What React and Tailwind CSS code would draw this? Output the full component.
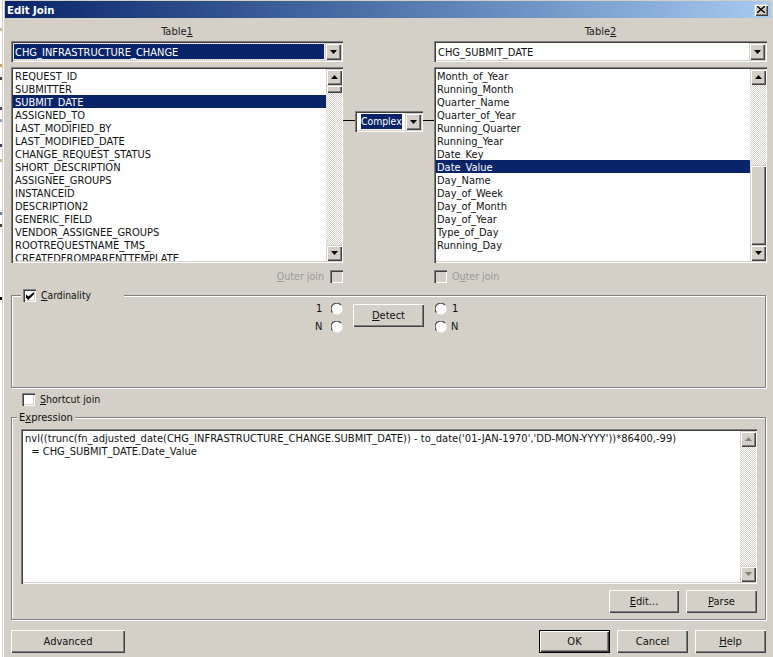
const FONT = "font-['DejaVu_Sans_Condensed','DejaVu_Sans',sans-serif] [font-stretch:condensed]";
const SUNKEN = "shadow-[inset_1px_1px_0_#808080,inset_2px_2px_0_#404040,inset_-1px_-1px_0_#ffffff,inset_-2px_-2px_0_#d4d0c8]";
const RAISED = "shadow-[inset_1px_1px_0_#ffffff,inset_-1px_-1px_0_#404040,inset_-2px_-2px_0_#808080]";
const RAISED2 = "shadow-[inset_1px_1px_0_#d4d0c8,inset_2px_2px_0_#ffffff,inset_-1px_-1px_0_#404040,inset_-2px_-2px_0_#808080]";
const CHECKER = "bg-[conic-gradient(#ffffff_25%,#d4d0c8_0_50%,#ffffff_0_75%,#d4d0c8_0)] bg-[length:2px_2px]";

const left = ["REQUEST_ID","SUBMITTER","SUBMIT_DATE","ASSIGNED_TO","LAST_MODIFIED_BY","LAST_MODIFIED_DATE","CHANGE_REQUEST_STATUS","SHORT_DESCRIPTION","ASSIGNEE_GROUPS","INSTANCEID","DESCRIPTION2","GENERIC_FIELD","VENDOR_ASSIGNEE_GROUPS","ROOTREQUESTNAME_TMS_","CREATEDFROMPARENTTEMPLATE"];
const right = ["Month_of_Year","Running_Month","Quarter_Name","Quarter_of_Year","Running_Quarter","Running_Year","Date_Key","Date_Value","Day_Name","Day_of_Week","Day_of_Month","Day_of_Year","Type_of_Day","Running_Day"];
const specks = [[28,"#c8b890"],[33,"#d8a060"],[10,"#404040"],[27,"#604060"],[9,"#90a8c0"],[22,"#404060"],[12,"#c8b890"],[50,"#6080a0"],[9,"#404040"],[70,"#000000"]];

function Arrow({ down = true, disabled = false }) {
  return (
    <svg width="7" height="4" viewBox="0 0 7 4" className="block">
      <path d={down ? "M0 0h7L3.5 4z" : "M0 4h7L3.5 0z"} fill={disabled ? "#808080" : "#000"} />
    </svg>
  );
}
function ScrollBtn({ down = true, disabled = false }) {
  return (
    <div className={`w-4 h-4 shrink-0 flex items-center justify-center bg-[#d4d0c8] ${RAISED2}`}>
      <Arrow down={down} disabled={disabled} />
    </div>
  );
}
function Combo({ text, selected }) {
  return (
    <div className={`h-[21px] flex items-center bg-white pl-[3px] pr-[2px] ${SUNKEN}`}>
      <span className={`flex-1 min-w-0 h-[15px] leading-[17px] pl-[1px] mr-[1px] whitespace-nowrap ${selected ? "bg-[#0a246a] text-white outline-1 outline-dotted outline-[#d4d0c8]" : ""}`}>{text}</span>
      <div className={`w-4 h-[17px] shrink-0 flex items-center justify-center bg-[#d4d0c8] ${RAISED2}`}><Arrow /></div>
    </div>
  );
}
function List({ items, sel, thumbTop, thumbH, textPad }) {
  return (
    <div className={`h-[196px] flex pl-[2px] pr-[1px] py-[2px] bg-white overflow-hidden ${SUNKEN}`}>
      <div className="flex-1 min-w-0 overflow-hidden">
        {items.map((t) => (
          <div key={t} className={`h-[13px] leading-[15px] whitespace-nowrap ${textPad} ${t === sel ? "bg-[#0a246a] text-white" : ""}`}>{t}</div>
        ))}
      </div>
      <div className="w-4 shrink-0 flex flex-col">
        <ScrollBtn down={false} />
        <div className={`flex-1 flex flex-col ${CHECKER}`}>
          <div style={{ height: thumbTop }} />
          <div style={{ height: thumbH }} className={`bg-[#d4d0c8] ${RAISED2}`} />
        </div>
        <ScrollBtn />
      </div>
    </div>
  );
}
function Check({ checked }) {
  return (
    <div className={`w-[13px] h-[13px] shrink-0 flex items-center justify-center ${SUNKEN} ${checked === undefined ? "bg-[#d4d0c8]" : "bg-white"}`}>
      {checked && (
        <svg width="8" height="8" viewBox="0 0 7 7"><path d="M0 2v3l2 2 5-5V0L2 4z" fill="#000" /></svg>
      )}
    </div>
  );
}
function Radio() {
  return (
    <svg width="12" height="12" viewBox="0 0 12 12" className="shrink-0">
      <circle cx="6" cy="6" r="5.5" fill="#fff" />
      <path d="M10 2A5.5 5.5 0 0 0 1.5 9.5" fill="none" stroke="#505050" strokeWidth="1.2" />
    </svg>
  );
}
function Btn({ children, className = "", def }) {
  return (
    <div className={`h-[23px] pt-[1px] flex items-center justify-center bg-[#d4d0c8] ${def ? "border border-black" : ""} ${RAISED} ${className}`}>{children}</div>
  );
}

export default function App() {
  return (
    <div className={`w-[773px] h-[657px] overflow-hidden flex bg-white text-[11px] text-[#111] ${FONT}`}>
      <div className="w-[2px] shrink-0 flex flex-col">
        {specks.map(([gap, color], i) => (
          <div key={i} className="h-[3px] shrink-0" style={{ marginTop: gap, background: color }} />
        ))}
      </div>
      <div className="w-[1px] shrink-0 bg-[#d4d0c8]" />
      <div className="flex-1 flex flex-col bg-[#d4d0c8] border-l border-white pl-[1px] pt-[1px]">
        <div className="h-[17px] shrink-0 mr-[2px] flex items-center justify-between bg-gradient-to-r from-[#0a246a] to-[#a6caf0] pl-[2px] pr-[3px]">
          <span className="text-white font-bold leading-none text-[11.3px] mt-[2px] font-['DejaVu_Sans',sans-serif]">Edit Join</span>
          <div className={`w-[14px] h-[12px] flex items-center justify-center bg-[#d4d0c8] ${RAISED2}`}>
            <svg width="8" height="7" viewBox="0 0 8 7"><path d="M0 0l8 7M8 0L0 7" stroke="#000" strokeWidth="1.4" /></svg>
          </div>
        </div>
        <div className="flex-1 flex flex-col pl-[6px] pr-[6px] pt-[6px]">
          <div className="flex h-[13px] leading-[15px] text-[#222]">
            <div className="w-[332px] text-center">Table<u>1</u></div>
            <div className="w-[91px]" />
            <div className="w-[333px] text-center">Table<u>2</u></div>
          </div>
          <div className="flex mt-[4px]">
            <div className="w-[332px] flex flex-col gap-[5px]">
              <Combo text="CHG_INFRASTRUCTURE_CHANGE" selected />
              <List items={left} sel="SUBMIT_DATE" thumbTop={0} thumbH={8} textPad="pl-[2px]" />
            </div>
            <div className="w-[91px] flex items-start pt-[70px]">
              <div className="w-[12px] h-px bg-black mt-[9px]" />
              <div className={`w-[68px] h-[21px] flex items-center bg-white pl-[6px] pr-[2px] ${SUNKEN}`}>
                <span className="flex-1 h-[15px]"><span className="inline-block bg-[#0a246a] text-white h-[15px] leading-[15px] text-[10.3px]">Complex</span></span>
                <div className={`w-4 h-[17px] shrink-0 flex items-center justify-center bg-[#d4d0c8] ${RAISED2}`}><Arrow /></div>
              </div>
              <div className="w-[11px] h-px bg-black mt-[9px]" />
            </div>
            <div className="w-[333px] flex flex-col gap-[5px]">
              <Combo text="CHG_SUBMIT_DATE" />
              <List items={right} sel="Date_Value" thumbTop={80} thumbH={80} textPad="pl-[1px]" />
            </div>
          </div>
          <div className="flex mt-[6px] h-[14px] text-[#9a9a9a] text-[10.6px]">
            <div className="w-[332px] flex items-center justify-end gap-[6px]"><span className="mt-[2px]"><u>O</u>uter join</span><Check /></div>
            <div className="w-[91px]" />
            <div className="flex items-center gap-[5px]"><Check /><span className="mt-[2px]">O<u>u</u>ter join</span></div>
          </div>
          <div className="h-[99px] mt-[6px] mr-[1px] relative pt-[6px]">
            <div className="h-[93px] border border-[#808080] shadow-[inset_1px_1px_0_#ffffff,1px_1px_0_#ffffff] flex pl-[303px] pt-[7px]">
              <div className="flex flex-col gap-[6px] w-[28px]">
                <div className="flex items-center h-[12px] justify-between"><span className="ml-[1px]">1</span><Radio /></div>
                <div className="flex items-center h-[12px] justify-between"><span>N</span><Radio /></div>
              </div>
              <Btn className="w-[71px] ml-[10px] mt-[1px]"><span><u>D</u>etect</span></Btn>
              <div className="flex flex-col gap-[6px] ml-[11px]">
                <div className="flex items-center h-[12px] gap-[5px]"><Radio /><span>1</span></div>
                <div className="flex items-center h-[12px] gap-[4px]"><Radio /><span>N</span></div>
              </div>
            </div>
            <div className="absolute left-[10px] top-0 w-[103px] h-[13px] flex items-center bg-[#d4d0c8] pl-[2px] gap-[5px]">
              <Check checked /><span className="text-[10.3px] mt-[1px]"><u>C</u>ardinality</span>
            </div>
          </div>
          <div className="flex items-center h-[13px] ml-[11px] mt-[5px] gap-[5px]">
            <Check checked={false} /><span className="text-[10.5px]"><u>S</u>hortcut join</span>
          </div>
          <div className="h-[209px] mt-[5px] mr-[1px] relative pt-[6px]">
            <div className="h-[203px] border border-[#808080] shadow-[inset_1px_1px_0_#ffffff,1px_1px_0_#ffffff] pt-[11px] pl-[9px] pr-[8px] flex flex-col">
              <div className={`h-[155px] flex bg-white pl-[2px] pr-[1px] py-[2px] ${SUNKEN}`}>
                <div className="flex-1 pl-[2px] pt-[1px] leading-[13px] min-w-0">
                  <div className="whitespace-nowrap tracking-[0.033px]">nvl((trunc(fn_adjusted_date(CHG_INFRASTRUCTURE_CHANGE.SUBMIT_DATE)) - to_date('01-JAN-1970','DD-MON-YYYY'))*86400,-99)</div>
                  <div className="whitespace-pre">  = CHG_SUBMIT_DATE.Date_Value</div>
                </div>
                <div className={`w-4 flex flex-col ${CHECKER}`}>
                  <ScrollBtn down={false} disabled />
                  <div className="flex-1" />
                  <ScrollBtn disabled />
                </div>
              </div>
              <div className="flex justify-end gap-[7px] mt-[6px]">
                <Btn className="w-[70px]"><span><u>E</u>dit...</span></Btn>
                <Btn className="w-[71px]"><span><u>P</u>arse</span></Btn>
              </div>
            </div>
            <div className="absolute left-[6px] top-0 h-[13px] leading-[13px] bg-[#d4d0c8] px-[2px]">E<u>x</u>pression</div>
          </div>
          <div className="flex mt-[10px] mr-[1px] items-start">
            <Btn className="w-[114px]">Advanced</Btn>
            <div className="flex-1" />
            <div className="flex gap-[7px]">
              <Btn className="w-[71px]" def>OK</Btn>
              <Btn className="w-[71px]">Cancel</Btn>
              <Btn className="w-[71px]"><span><u>H</u>elp</span></Btn>
            </div>
          </div>
        </div>
      </div>
    </div>
  );
}
